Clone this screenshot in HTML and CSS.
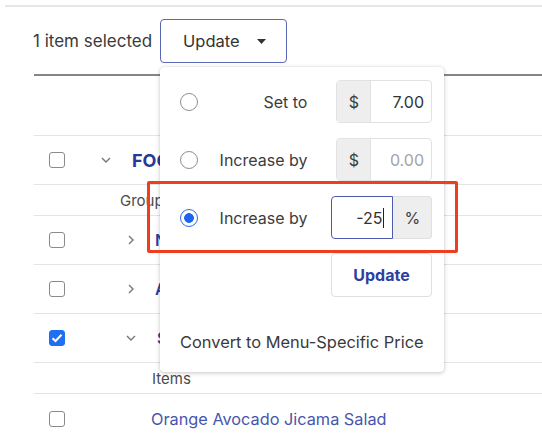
FILE: index.html
```html
<!DOCTYPE html>
<html>
<head>
<meta charset="utf-8">
<link rel="stylesheet" href="styles.css">
</head>
<body>
<div class="topline"></div>
<div class="toolbar">
  <span class="sel-count">1 item selected</span>
  <button class="update-btn">Update <svg class="caret" width="9" height="5" viewBox="0 0 9 5"><path d="M0 0H9L4.5 5Z" fill="#333"/></svg></button>
</div>
<div class="table">
  <div class="thead"></div>
  <div class="row row-tall">
    <span class="cb"></span>
    <svg class="chev chev-l1" width="10" height="6" viewBox="0 0 10 6"><path d="M1 1L5 5L9 1" fill="none" stroke="#777" stroke-width="1.4"/></svg>
    <span class="cat">FOOD</span>
  </div>
  <div class="row row-label"><span class="lbl lbl-group">Groups</span></div>
  <div class="row row-tall">
    <span class="cb"></span>
    <svg class="chev chev-l2r" width="6" height="10" viewBox="0 0 6 10"><path d="M1 1L5 5L1 9" fill="none" stroke="#777" stroke-width="1.4"/></svg>
    <span class="grp">Noodles</span>
  </div>
  <div class="row row-tall">
    <span class="cb"></span>
    <svg class="chev chev-l2r" width="6" height="10" viewBox="0 0 6 10"><path d="M1 1L5 5L1 9" fill="none" stroke="#777" stroke-width="1.4"/></svg>
    <span class="grp">Appetizers</span>
  </div>
  <div class="row row-tall">
    <span class="cb cb-on"><svg width="12" height="10" viewBox="0 0 12 10"><path d="M1.5 5.2L4.5 8L10.5 1.8" fill="none" stroke="#fff" stroke-width="2"/></svg></span>
    <svg class="chev chev-l2" width="10" height="6" viewBox="0 0 10 6"><path d="M1 1L5 5L9 1" fill="none" stroke="#777" stroke-width="1.4"/></svg>
    <span class="grp">Salads</span>
  </div>
  <div class="row row-label"><span class="lbl lbl-items">Items</span></div>
  <div class="row row-tall row-last">
    <span class="cb"></span>
    <span class="item">Orange Avocado Jicama Salad</span>
  </div>
</div>

<div class="menu">
  <div class="opt">
    <span class="radio"></span>
    <span class="opt-label">Set to</span>
    <div class="igroup">
      <span class="addon">$</span>
      <span class="ival">7.00</span>
    </div>
  </div>
  <div class="opt">
    <span class="radio"></span>
    <span class="opt-label">Increase by</span>
    <div class="igroup">
      <span class="addon">$</span>
      <span class="ival ival-ph">0.00</span>
    </div>
  </div>
  <div class="opt opt-sel">
    <span class="radio radio-on"></span>
    <span class="opt-label">Increase by</span>
    <div class="igroup igroup-pct">
      <span class="ival ival-focus">-25<span class="cursor"></span></span>
      <span class="addon addon-pct">%</span>
    </div>
  </div>
  <div class="apply-row"><button class="apply-btn">Update</button></div>
  <div class="convert">Convert to Menu-Specific Price</div>
</div>

<div class="highlight"></div>
</body>
</html>
```

FILE: styles.css
```css
* { box-sizing: border-box; }
html, body { margin: 0; padding: 0; }
body {
  width: 542px;
  height: 441px;
  overflow: hidden;
  background: #fff;
  font-family: Inter, "Noto Sans", sans-serif;
  color: #383838;
  position: relative;
}
.topline {
  margin: 5px 0 0 5px;
  border-top: 2px solid #e6e6e6;
}
.toolbar {
  display: flex;
  align-items: center;
  margin-top: 12px;
  padding-left: 33px;
  height: 44px;
}
.sel-count {
  font-size: 17px;
  color: #3a3a3a;
  width: 120px;
  white-space: nowrap;
}
.update-btn {
  margin-left: 7px;
  width: 127px;
  height: 44px;
  border: 1.5px solid #5b68b6;
  border-radius: 4px;
  background: #fff;
  display: flex;
  align-items: center;
  padding: 0 0 0 22px;
  font-family: Inter, sans-serif;
  font-size: 16.5px;
  color: #333;
}
.caret { margin-left: 17px; }
.table {
  margin: 11px 0 0 34px;
  border-top: 2px solid #858585;
}
.thead {
  height: 60px;
  border-bottom: 1px solid #e4e4e4;
}
.row {
  display: flex;
  align-items: center;
  border-bottom: 1px solid #e4e4e4;
}
.row-tall { height: 49px; }
.row-label { height: 31px; }
.row-last { border-bottom: none; }
.cb {
  width: 16px;
  height: 16px;
  margin-left: 15px;
  border: 1.5px solid #8a8a8a;
  border-radius: 3px;
  flex: none;
  display: flex;
  align-items: center;
  justify-content: center;
}
.cb-on {
  background: #1f6ff2;
  border-color: #1f6ff2;
}
.chev { flex: none; }
.chev-l1 { margin-left: 36px; }
.chev-l2 { margin-left: 61px; }
.chev-l2r { margin-left: 63px; }
.cat {
  margin-left: 21px;
  font-size: 18px;
  font-weight: 700;
  color: #26389a;
}
.grp {
  margin-left: 21px;
  font-size: 16px;
  font-weight: 600;
  color: #2d3d9e;
}
.lbl { font-size: 15px; color: #4a4a4a; }
.lbl-group { margin-left: 86px; }
.lbl-items { margin-left: 118px; }
.item {
  margin-left: 86px;
  font-size: 16.3px;
  color: #4656ad;
}

.menu {
  position: absolute;
  left: 160px;
  top: 67px;
  width: 284px;
  height: 305px;
  background: #fff;
  border-radius: 4px;
  box-shadow: 0 1px 4px rgba(0,0,0,0.22), 0 0 1px rgba(0,0,0,0.15);
  padding: 13px 12px 0 20px;
  display: flex;
  flex-direction: column;
}
.opt {
  display: flex;
  align-items: center;
  height: 43px;
  margin-bottom: 15px;
}
.radio {
  width: 18px;
  height: 18px;
  border: 1.5px solid #8f8f8f;
  border-radius: 50%;
  flex: none;
  background: #fff;
}
.radio-on {
  border: 1.5px solid #2a6de6;
  background: radial-gradient(circle, #1c64f2 0 4.5px, #fff 5.2px);
}
.opt-label {
  width: 110px;
  text-align: right;
  font-size: 16px;
  color: #3c3c3c;
}
.igroup {
  margin-left: 29px;
  width: 96px;
  height: 43px;
  display: flex;
  border: 1px solid #e2e2e2;
  border-radius: 4px;
  overflow: hidden;
}
.addon {
  width: 34px;
  background: #eeeeee;
  border-right: 1px solid #e2e2e2;
  display: flex;
  align-items: center;
  justify-content: center;
  font-size: 16px;
  color: #3c3c3c;
}
.ival {
  flex: 1;
  display: flex;
  align-items: center;
  justify-content: flex-end;
  padding-right: 7px;
  font-size: 16px;
  color: #333;
}
.ival-ph { color: #a3a3a3; }
.igroup-pct {
  margin-left: 24px;
  width: 101px;
  border: none;
  overflow: visible;
}
.ival-focus {
  flex: none;
  width: 62px;
  border: 1.5px solid #4c5bb0;
  border-radius: 4px 0 0 4px;
  padding-right: 8px;
}
.cursor {
  display: inline-block;
  width: 1px;
  height: 20px;
  background: #222;
  margin-left: 1px;
}
.addon-pct {
  flex: 1;
  border: 1px solid #e0e0e0;
  border-left: none;
  border-radius: 0 4px 4px 0;
}
.apply-row {
  display: flex;
  justify-content: flex-end;
  margin-top: -1px;
}
.apply-btn {
  width: 101px;
  height: 44px;
  border: 1px solid #e0e0e0;
  border-radius: 4px;
  background: #fff;
  font-family: Inter, sans-serif;
  font-size: 16px;
  font-weight: 700;
  color: #2f3f9f;
}
.convert {
  margin-top: 35px;
  font-size: 16.4px;
  color: #3a3a3a;
}
.highlight {
  position: absolute;
  left: 147px;
  top: 181px;
  width: 311px;
  height: 72px;
  border: 3px solid #ee3d1f;
  border-radius: 2px;
}
```
